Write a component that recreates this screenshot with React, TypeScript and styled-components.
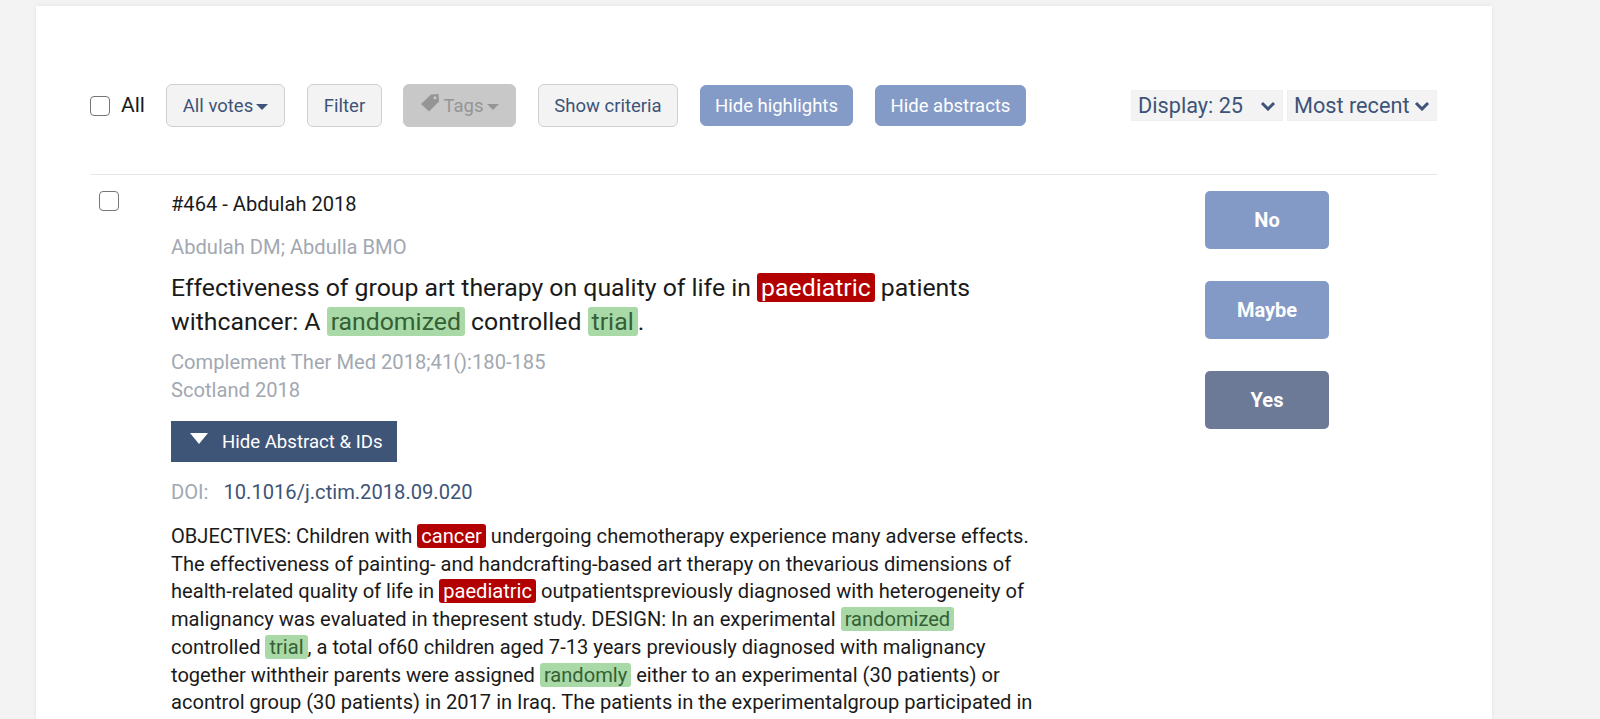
import React from "react";
import styled, { createGlobalStyle } from "styled-components";

const Global = createGlobalStyle`
  html, body { margin: 0; padding: 0; height: 100%; overflow: hidden; background: #f3f3f3; }
  #root { height: 100%; }
  * { box-sizing: border-box; }
`;
const Page = styled.div`
  width: 1600px; height: 719px; overflow: hidden; background: #f3f3f3;
  font-family: Roboto, "Liberation Sans", sans-serif; color: #1a1a1a;
`;
const Sheet = styled.main`
  margin: 6px 0 0 36px; width: 1456px; height: 713px; background: #fff;
  box-shadow: 0 0 4px rgba(0,0,0,.08); padding: 78px 55px 0 54px; overflow: hidden;
`;
const Toolbar = styled.div`
  display: flex; align-items: flex-start; height: 91px; border-bottom: 1px solid #e8e8e8;
`;
const Box = styled.input.attrs({ type: "checkbox" })`
  appearance: none; margin: 0; width: 20px; height: 20px; border: 1.5px solid #767676; border-radius: 4px; background: #fff; flex: none;
`;
const AllBox = styled(Box)`margin-top: 12px;`;
const AllLabel = styled.span`font-size: 21px; line-height: 43px; margin: 0 20px 0 11px; width: 25px;`;
const Btn = styled.button<{ $w: number; $kind?: string; $ml: number }>`
  width: ${p => p.$w}px; margin-left: ${p => p.$ml}px; height: ${p => p.$kind === "blue" ? 41 : 43}px;
  margin-top: ${p => p.$kind === "blue" ? 1 : 0}px; border-radius: 6px; font: 400 18.5px Roboto, sans-serif;
  display: flex; align-items: center; justify-content: center; gap: 3px; padding: 0;
  border: 1.5px solid ${p => p.$kind === "blue" ? "#859bc7" : p.$kind === "off" ? "#c8c8c8" : "#cfcfcf"};
  background: ${p => p.$kind === "blue" ? "#859bc7" : p.$kind === "off" ? "#c8c8c8" : "#f3f3f3"};
  color: ${p => p.$kind === "blue" ? "#fff" : p.$kind === "off" ? "#959595" : "#3d5478"};
`;
const Caret = styled.i`width: 0; height: 0; border: 6px solid transparent; border-top-color: currentColor; border-bottom: 0; margin-top: 2px;`;
const TagIcon = styled.svg`margin: -7px 0 0 0;`;
const Selects = styled.div`margin: 6px 0 0 auto; display: flex; gap: 4px;`;
const Select = styled.div<{ $w: number }>`
  width: ${p => p.$w}px; height: 31px; background: #f3f3f3; border: 1px solid #efefef; color: #3d5478;
  font-size: 21.7px; display: flex; align-items: center; justify-content: space-between; padding: 0 6px 0 6px;
`;
const Record = styled.section`display: flex; padding-top: 16px;`;
const RowBox = styled.div`width: 81px; padding-left: 9px; flex: none;`;
const Body = styled.div`width: 866px; flex: none;`;
const Ref = styled.div`font-size: 20.1px; line-height: 27px;`;
const Authors = styled.div`font-size: 20.15px; line-height: 27px; color: #a2a8b1; margin-top: 16px;`;
const Title = styled.h2`font-weight: 400; font-size: 24.8px; line-height: 34px; margin: 10px 0 0; width: 830px;`;
const Hl = styled.mark<{ $c: "red" | "green" }>`
  background: ${p => p.$c === "red" ? "#b30000" : "#a8d9a6"}; color: ${p => p.$c === "red" ? "#fff" : "#355f35"};
  border-radius: 3px; padding: 0 4px;
`;
const Journal = styled.div`font-size: 20.15px; line-height: 27.5px; color: #a2a8b1; margin-top: 10px;`;
const AbstractBtn = styled.button`
  display: flex; align-items: center; gap: 14px; width: 226px; height: 41px; margin: 17px 0 0; padding: 0 0 0 19px; border: 0;
  background: #3f5578; color: #fff; font: 400 18.6px Roboto, sans-serif;
`;
const Tri = styled.i`width: 0; height: 0; border: 9px solid transparent; border-top: 11px solid #fff; border-bottom: 0; margin-top: -6px;`;
const Doi = styled.div`font-size: 20.15px; line-height: 27px; margin-top: 17px; color: #a2a8b1;`;
const DoiLink = styled.span`color: #3d5478; margin-left: 10px;`;
const Abstract = styled.p`margin: 17px 0 0; width: 866px; font-size: 20.1px; line-height: 27.7px;`;
const Votes = styled.div`margin-left: 168px; display: flex; flex-direction: column; gap: 32px;`;
const Vote = styled.button<{ $dark?: boolean }>`
  width: 124px; height: 58px; border: 0; border-radius: 5px; color: #fff; font: 700 20px Roboto, sans-serif;
  background: ${p => p.$dark ? "#6c7a97" : "#839ac6"};
`;

const Chevron = () => (
  <svg width="16" height="10" viewBox="0 0 16 10"><path d="M2 2l6 6 6-6" fill="none" stroke="#3d5478" strokeWidth="3" /></svg>
);

export default function App() {
  return (
    <Page>
      <Global />
      <Sheet>
        <Toolbar>
          <AllBox />
          <AllLabel>All</AllLabel>
          <Btn $w={119} $ml={0}>All votes<Caret /></Btn>
          <Btn $w={75} $ml={22}>Filter</Btn>
          <Btn $w={113} $ml={21} $kind="off">
            <TagIcon width="20" height="19" viewBox="0 0 20 19"><path fillRule="evenodd" fill="#959595" d="M1 11 11 1.5 18.5 1 19 8.5 9 18.5zM15 3.2a1.6 1.6 0 1 0 .01 0z" /></TagIcon>
            Tags<Caret />
          </Btn>
          <Btn $w={140} $ml={22}>Show criteria</Btn>
          <Btn $w={153} $ml={22} $kind="blue">Hide highlights</Btn>
          <Btn $w={151} $ml={22} $kind="blue">Hide abstracts</Btn>
          <Selects>
            <Select $w={152}>Display: 25<Chevron /></Select>
            <Select $w={150}>Most recent<Chevron /></Select>
          </Selects>
        </Toolbar>
        <Record>
          <RowBox><Box /></RowBox>
          <Body>
            <Ref>#464 - Abdulah 2018</Ref>
            <Authors>Abdulah DM; Abdulla BMO</Authors>
            <Title>Effectiveness of group art therapy on quality of life in <Hl $c="red">paediatric</Hl> patients withcancer: A <Hl $c="green">randomized</Hl> controlled <Hl $c="green">trial</Hl>.</Title>
            <Journal>Complement Ther Med 2018;41():180-185<br />Scotland 2018</Journal>
            <AbstractBtn><Tri />Hide Abstract &amp; IDs</AbstractBtn>
            <Doi>DOI: <DoiLink>10.1016/j.ctim.2018.09.020</DoiLink></Doi>
            <Abstract>
              OBJECTIVES: Children with <Hl $c="red">cancer</Hl> undergoing chemotherapy experience many adverse effects. The effectiveness of painting- and handcrafting-based art therapy on thevarious dimensions of health-related quality of life in <Hl $c="red">paediatric</Hl> outpatientspreviously diagnosed with heterogeneity of malignancy was evaluated in thepresent study. DESIGN: In an experimental <Hl $c="green">randomized</Hl> controlled <Hl $c="green">trial</Hl>, a total of60 children aged 7-13 years previously diagnosed with malignancy together withtheir parents were assigned <Hl $c="green">randomly</Hl> either to an experimental (30 patients) or acontrol group (30 patients) in 2017 in Iraq. The patients in the experimentalgroup participated in
            </Abstract>
          </Body>
          <Votes>
            <Vote>No</Vote>
            <Vote>Maybe</Vote>
            <Vote $dark>Yes</Vote>
          </Votes>
        </Record>
      </Sheet>
    </Page>
  );
}
